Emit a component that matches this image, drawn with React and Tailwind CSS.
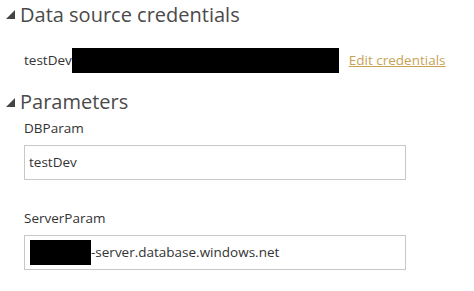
import React from "react";

function Caret() {
  return (
    <svg width="9" height="9" viewBox="0 0 9 9" className="shrink-0">
      <polygon points="9,0 9,9 0,9" fill="#444" />
    </svg>
  );
}

export default function App() {
  return (
    <div className="w-[474px] h-[291px] bg-white text-[#444] overflow-hidden" style={{ fontFamily: "'Open Sans', 'Noto Sans', sans-serif" }}>
      {/* Data source credentials */}
      <div className="flex items-center gap-[5px] pl-[6px] pt-[1px] h-[28px]">
        <Caret />
        <h2 className="text-[20px] leading-[28px] text-[#4a4a4a]">Data source credentials</h2>
      </div>

      <div className="flex items-center pl-[24px] mt-[20px] h-[25px]">
        <span className="text-[13.5px] text-[#333]">testDev</span>
        <div className="w-[267px] h-[25px] bg-black shrink-0" />
        <a className="ml-[10px] text-[13.5px] text-[#c7a255] underline underline-offset-[1px] cursor-pointer">Edit credentials</a>
      </div>

      {/* Parameters */}
      <div className="flex items-center gap-[5px] pl-[6px] mt-[15px] h-[28px]">
        <Caret />
        <h2 className="text-[20px] leading-[28px] text-[#4a4a4a]">Parameters</h2>
      </div>

      <div className="pl-[24px]">
        <div className="text-[13.5px] text-[#333] mt-[2px] h-[20px] leading-[20px]">DBParam</div>
        <div className="w-[382px] h-[35px] border border-[#c8c8c8] mt-[7px] flex items-center pl-[4px] text-[13.5px] text-[#333]">
          testDev
        </div>

        <div className="text-[13.5px] text-[#333] mt-[28px] h-[20px] leading-[20px]">ServerParam</div>
        <div className="w-[382px] h-[35px] border border-[#c8c8c8] mt-[7px] flex items-center pl-[5px] text-[13.5px] text-[#333]">
          <div className="w-[61px] h-[25px] bg-black shrink-0" />
          <span>-server.database.windows.net</span>
        </div>
      </div>
    </div>
  );
}
